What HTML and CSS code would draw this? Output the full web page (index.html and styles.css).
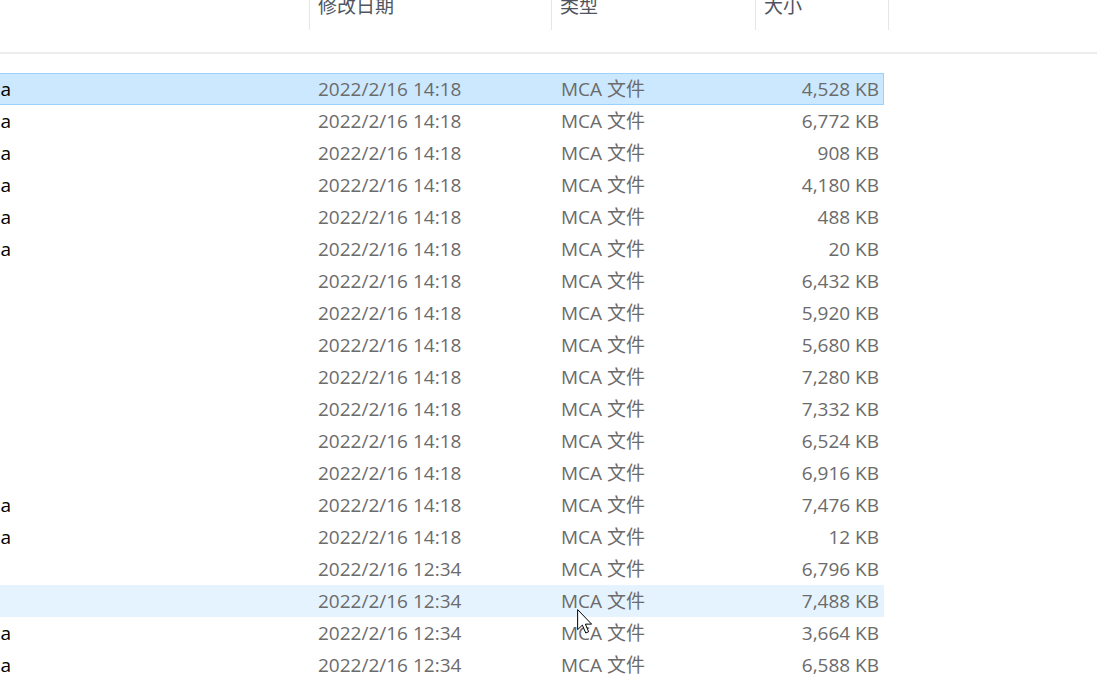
FILE: index.html
```html
<!DOCTYPE html>
<html lang="zh-CN">
<head>
<meta charset="utf-8">
<title>region</title>
<link rel="stylesheet" href="styles.css">
</head>
<body>
<div class="view">
  <div class="header">
    <div class="hcell hname"><span class="hlabel">名称</span></div>
    <div class="hcell"><span class="hlabel">修改日期</span></div>
    <div class="hcell"><span class="hlabel">类型</span></div>
    <div class="hcell hsize"><span class="hlabel">大小</span></div>
  </div>
  <div class="rows">
    <div class="row selected"><span class="name">r.-1.-3.mca</span><span class="date">2022/2/16 14:18</span><span class="type">MCA 文件</span><span class="size">4,528 KB</span></div>
    <div class="row"><span class="name">r.-1.-2.mca</span><span class="date">2022/2/16 14:18</span><span class="type">MCA 文件</span><span class="size">6,772 KB</span></div>
    <div class="row"><span class="name">r.-1.-4.mca</span><span class="date">2022/2/16 14:18</span><span class="type">MCA 文件</span><span class="size">908 KB</span></div>
    <div class="row"><span class="name">r.-2.-1.mca</span><span class="date">2022/2/16 14:18</span><span class="type">MCA 文件</span><span class="size">4,180 KB</span></div>
    <div class="row"><span class="name">r.-2.-2.mca</span><span class="date">2022/2/16 14:18</span><span class="type">MCA 文件</span><span class="size">488 KB</span></div>
    <div class="row"><span class="name">r.-3.-1.mca</span><span class="date">2022/2/16 14:18</span><span class="type">MCA 文件</span><span class="size">20 KB</span></div>
    <div class="row"><span class="name">r.0.0.mca</span><span class="date">2022/2/16 14:18</span><span class="type">MCA 文件</span><span class="size">6,432 KB</span></div>
    <div class="row"><span class="name">r.0.1.mca</span><span class="date">2022/2/16 14:18</span><span class="type">MCA 文件</span><span class="size">5,920 KB</span></div>
    <div class="row"><span class="name">r.1.0.mca</span><span class="date">2022/2/16 14:18</span><span class="type">MCA 文件</span><span class="size">5,680 KB</span></div>
    <div class="row"><span class="name">r.1.1.mca</span><span class="date">2022/2/16 14:18</span><span class="type">MCA 文件</span><span class="size">7,280 KB</span></div>
    <div class="row"><span class="name">r.0.2.mca</span><span class="date">2022/2/16 14:18</span><span class="type">MCA 文件</span><span class="size">7,332 KB</span></div>
    <div class="row"><span class="name">r.2.0.mca</span><span class="date">2022/2/16 14:18</span><span class="type">MCA 文件</span><span class="size">6,524 KB</span></div>
    <div class="row"><span class="name">r.2.1.mca</span><span class="date">2022/2/16 14:18</span><span class="type">MCA 文件</span><span class="size">6,916 KB</span></div>
    <div class="row"><span class="name">r.-1.-5.mca</span><span class="date">2022/2/16 14:18</span><span class="type">MCA 文件</span><span class="size">7,476 KB</span></div>
    <div class="row"><span class="name">r.-4.-1.mca</span><span class="date">2022/2/16 14:18</span><span class="type">MCA 文件</span><span class="size">12 KB</span></div>
    <div class="row"><span class="name">r.1.2.mca</span><span class="date">2022/2/16 12:34</span><span class="type">MCA 文件</span><span class="size">6,796 KB</span></div>
    <div class="row hover"><span class="name">r.2.2.mca</span><span class="date">2022/2/16 12:34</span><span class="type">MCA 文件</span><span class="size">7,488 KB</span></div>
    <div class="row"><span class="name">r.-2.-3.mca</span><span class="date">2022/2/16 12:34</span><span class="type">MCA 文件</span><span class="size">3,664 KB</span></div>
    <div class="row"><span class="name">r.-3.-2.mca</span><span class="date">2022/2/16 12:34</span><span class="type">MCA 文件</span><span class="size">6,588 KB</span></div>
  </div>
</div>
<svg class="cursor" width="16" height="26" viewBox="0 0 12.8 20.8" aria-hidden="true">
  <path d="M0.5 0.5 L0.5 16.5 L4.3 12.9 L7 19.2 L9.3 18.2 L6.7 12.1 L11.7 12.1 Z" fill="#fff" stroke="#000" stroke-width="0.8" stroke-linejoin="miter"/>
</svg>
</body>
</html>
```
FILE: styles.css
```css
html, body {
  margin: 0;
  padding: 0;
  background: #ffffff;
  overflow: hidden;
}
body {
  width: 1097px;
  height: 686px;
  position: relative;
  font-family: "Open Sans", "Noto Sans CJK SC", sans-serif;
  font-size: 19px;
}
.view {
  margin-left: -120px;
}
.header {
  display: grid;
  grid-template-columns: 429px 242px 204px 134px;
  height: 52px;
  border-bottom: 2px solid #ececec;
}
.hcell {
  height: 30px;
  border-left: 1px solid #e6e6e6;
  padding-left: 8px;
  color: #4f5560;
  overflow: hidden;
}
.hname {
  border-left: none;
}
.hsize {
  border-right: 1px solid #e6e6e6;
}
.hlabel {
  display: block;
  line-height: 12px;
}
.rows {
  padding-top: 19px;
}
.row {
  display: grid;
  grid-template-columns: 429px 242px 204px 129px;
  width: 1004px;
  height: 32px;
  box-sizing: border-box;
  border: 1px solid transparent;
  line-height: 30px;
  color: #6b6b6b;
  white-space: nowrap;
}
.row.selected {
  background: #cce8ff;
  border-color: #99d1ff;
}
.row.hover {
  background: #e5f3ff;
  border-color: #e5f3ff;
}
.name {
  color: #000000;
  padding-left: 36px;
  overflow: hidden;
}
.date {
  padding-left: 8px;
}
.type {
  padding-left: 9px;
}
.size {
  text-align: right;
  padding-right: 6px;
}
.cursor {
  position: absolute;
  left: 577px;
  top: 609px;
}
```
